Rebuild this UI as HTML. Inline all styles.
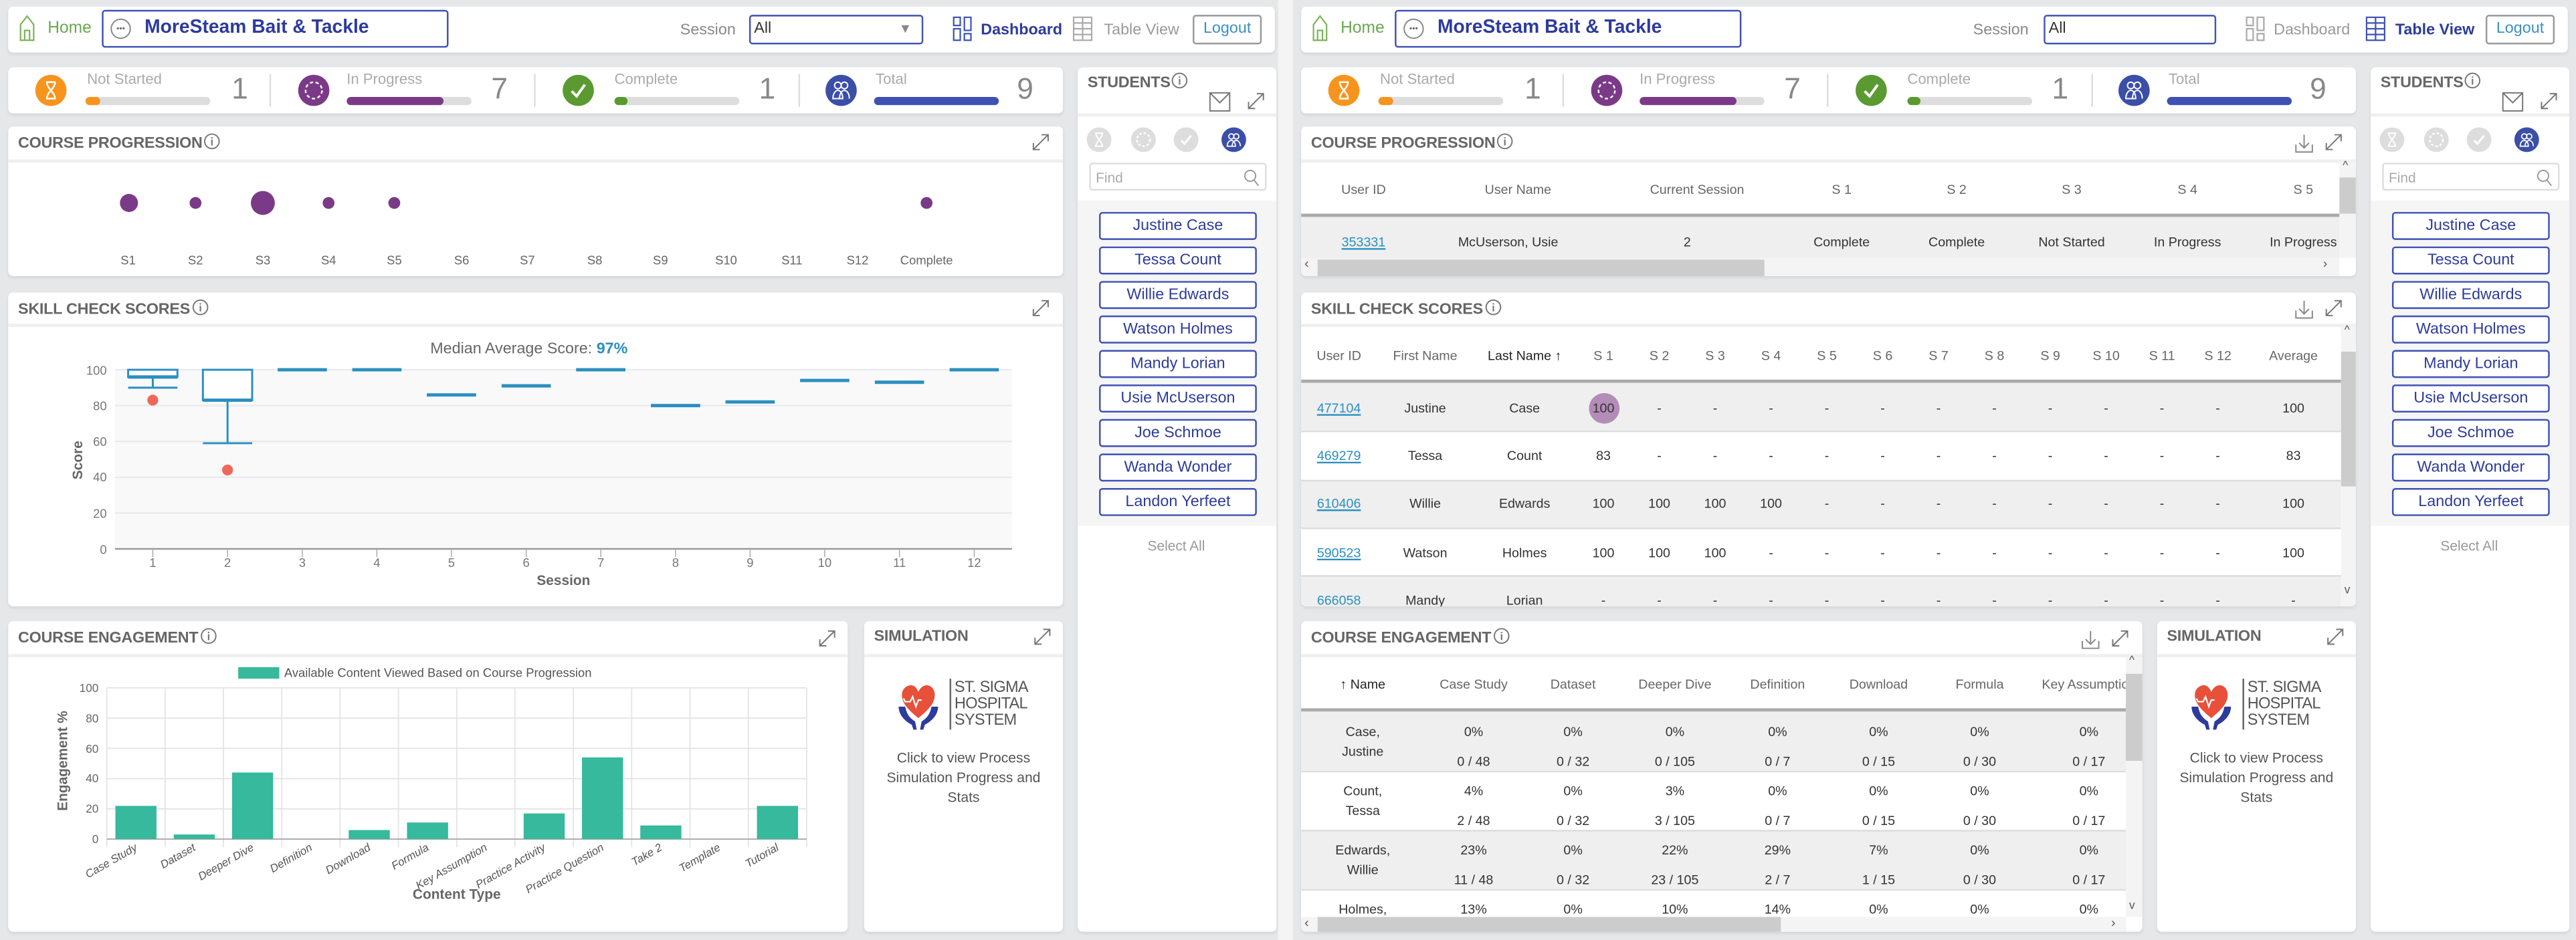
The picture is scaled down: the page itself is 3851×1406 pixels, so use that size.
<!DOCTYPE html>
<html><head><meta charset="utf-8"><style>
*{margin:0;padding:0;box-sizing:border-box}
html,body{width:3851px;height:1406px;overflow:hidden;background:#e6e7e9;font-family:"Liberation Sans",Arial,sans-serif}
#w{position:absolute;left:0;top:0;width:1568px;height:572px;transform:scale(2.456,2.458);transform-origin:0 0}
.half{position:absolute;top:0;width:778px;height:572px}
.card{position:absolute;background:#fff;border-radius:3px;box-shadow:0 1px 2px rgba(0,0,0,.08)}
.a{position:absolute;white-space:nowrap}
.c{position:absolute;white-space:nowrap;transform:translate(-50%,-50%)}
.ttl{position:absolute;left:6px;top:4px;font-size:9.5px;color:#666;font-weight:bold;letter-spacing:-.1px}
.hl{position:absolute;left:0;right:0;height:2px;background:#efefef}
.lbl{position:absolute;font-size:9px;color:#aaa;top:43px}
.bar{position:absolute;top:58.5px;width:76px;height:5px;border-radius:3px;background:#ddd;overflow:hidden}
.bar i{position:absolute;left:0;top:0;bottom:0;border-radius:3px}
.num{position:absolute;font-size:18px;color:#888;top:44px}
.dv{position:absolute;top:44px;width:1px;height:20px;background:#ddd}
.sb{position:absolute;left:13px;width:96px;height:17.5px;border:1px solid #3f51b5;border-bottom-width:1.5px;border-radius:2px;background:#fff;color:#2d3b9c;font-size:9.5px;text-align:center;line-height:16px}
.row{position:absolute;display:flex;font-size:8px;color:#333}
.row span{text-align:center;flex:none;white-space:nowrap;overflow:hidden}
.lnk{color:#2a8fc0;text-decoration:underline}
.hd{color:#666}
</style></head><body><div id="w">
<div class="a" style="left:778px;top:0;width:9px;height:572px;background:#f4f4f5"></div>

<!-- ============ LEFT HALF ============ -->
<div class="half" style="left:0">
 <!-- header -->
 <div class="card" style="left:5px;top:4px;width:771px;height:28px">
  <svg class="a" style="left:7px;top:5px" width="9" height="16" viewBox="0 0 9 16"><path d="M.5 15.5V6L4.5.8 8.5 6v9.5zM3 15.5V9.5h3v6" fill="none" stroke="#7bb35a" stroke-width=".9"/></svg>
  <div class="a" style="left:24px;top:8px;font-size:10px;color:#6aa84f">Home</div>
  <div class="a" style="left:57px;top:2px;width:211px;height:23px;border:1.5px solid #3f51b5;border-radius:2px"></div>
  <svg class="a" style="left:62px;top:7px" width="13" height="13"><circle cx="6.5" cy="6.5" r="5.8" fill="none" stroke="#888" stroke-width=".8"/><text x="6.5" y="8" font-size="5" text-anchor="middle" fill="#666">•••</text></svg>
  <div class="a" style="left:83px;top:6.5px;font-size:11.5px;color:#2d3b9c;font-weight:bold">MoreSteam Bait &amp; Tackle</div>
  <div class="a" style="left:409px;top:8.5px;font-size:9.5px;color:#888">Session</div>
  <div class="a" style="left:451px;top:5px;width:106px;height:18px;border:1px solid #4255b0;border-radius:2px;font-size:9.5px;color:#333;line-height:16px;padding-left:2px">All<span style="position:absolute;right:6px;top:0;color:#888;font-size:8px">▼</span></div>
  <svg class="a" style="left:575px;top:6px" width="12" height="15"><g fill="none" stroke="#3f51b5" stroke-width=".9"><rect x=".5" y=".5" width="4" height="5"/><rect x="7" y=".5" width="4" height="8"/><rect x=".5" y="7.5" width="4" height="7"/><rect x="7" y="10.5" width="4" height="4"/></g></svg>
  <div class="a" style="left:592px;top:8.5px;font-size:9.5px;color:#2d3b9c;font-weight:bold">Dashboard</div>
  <svg class="a" style="left:648px;top:6px" width="12" height="15"><g fill="none" stroke="#aaa" stroke-width=".9"><rect x=".5" y=".5" width="11" height="14"/><path d="M.5 4h11M.5 7.5h11M.5 11h11M6 .5v14"/></g></svg>
  <div class="a" style="left:667px;top:8.5px;font-size:9.5px;color:#999">Table View</div>
  <div class="a" style="left:721px;top:5px;width:42px;height:18px;border:1.5px solid #999;border-radius:2px;font-size:9.5px;color:#3a8fc7;text-align:center;line-height:15px">Logout</div>
 </div>
 <!-- stats -->
 <div class="card" style="left:5px;top:41px;width:642px;height:27.5px">
  <svg class="a" style="left:16px;top:4px" width="20" height="20"><circle cx="10" cy="10" r="9.5" fill="#f7941d"/><path d="M7 5h6M7 15h6M7.5 5c0 4 5 6 5 10M12.5 5c0 4-5 6-5 10" stroke="#fff" fill="none" stroke-width="1"/></svg>
  <div class="lbl" style="left:48px;top:2px">Not Started</div>
  <div class="bar" style="left:47px;top:17.5px"><i style="width:9px;background:#f7941d"></i></div>
  <div class="num" style="left:136px;top:3px">1</div>
  <div class="dv" style="left:159px;top:4px"></div>
  <svg class="a" style="left:176px;top:4px" width="20" height="20"><circle cx="10" cy="10" r="9.5" fill="#7b3a87"/><circle cx="10" cy="10" r="5" fill="none" stroke="#fff" stroke-width="1" stroke-dasharray="2 1.5"/></svg>
  <div class="lbl" style="left:206px;top:2px">In Progress</div>
  <div class="bar" style="left:206px;top:17.5px"><i style="width:59px;background:#7b3a87"></i></div>
  <div class="num" style="left:294px;top:3px">7</div>
  <div class="dv" style="left:320px;top:4px"></div>
  <svg class="a" style="left:337px;top:4px" width="20" height="20"><circle cx="10" cy="10" r="9.5" fill="#5a9a30"/><path d="M6 10.5l3 3 5-7" stroke="#fff" fill="none" stroke-width="1.6"/></svg>
  <div class="lbl" style="left:369px;top:2px">Complete</div>
  <div class="bar" style="left:369px;top:17.5px"><i style="width:8px;background:#5a9a30"></i></div>
  <div class="num" style="left:457px;top:3px">1</div>
  <div class="dv" style="left:481px;top:4px"></div>
  <svg class="a" style="left:497px;top:4px" width="20" height="20"><circle cx="10" cy="10" r="9.5" fill="#3b4ea8"/><g fill="none" stroke="#fff" stroke-width=".8"><circle cx="8" cy="7" r="2"/><circle cx="12" cy="7" r="2"/><path d="M5 15c0-3 1.5-5 3-5s3 2 3 5zM9 15c0-3 1.5-5 3-5s3 2 3 5"/></g></svg>
  <div class="lbl" style="left:528px;top:2px">Total</div>
  <div class="bar" style="left:527px;top:17.5px"><i style="width:76px;background:#3f51b5"></i></div>
  <div class="num" style="left:614px;top:3px">9</div>
 </div>
 <!-- students -->
 <div class="card" style="left:656px;top:41px;width:121px;height:526px">
  <div class="ttl" style="top:3px">STUDENTS<svg width="10" height="10" style="vertical-align:-1px;margin-left:1px"><circle cx="5" cy="5" r="4.4" fill="none" stroke="#777" stroke-width=".8"/><path d="M5 4v3.5M5 2.5v.8" stroke="#777" stroke-width=".9"/></svg></div>
  <svg class="a" style="left:80px;top:15px" width="13" height="12"><rect x=".5" y=".5" width="12" height="11" fill="none" stroke="#777" stroke-width=".8"/><path d="M.5 .5l6 6 6-6" fill="none" stroke="#777" stroke-width=".8"/></svg>
  <svg class="a" style="left:103px;top:15px" width="11" height="11"><path d="M6 1h4v4M10 1L1 10M1 6v4h4" fill="none" stroke="#777" stroke-width=".8"/></svg>
  <div class="hl" style="top:28px"></div>
  <svg class="a" style="left:5px;top:36px" width="110" height="16"><circle cx="8" cy="8" r="7.5" fill="#ddd"/><circle cx="35" cy="8" r="7.5" fill="#ddd"/><circle cx="61" cy="8" r="7.5" fill="#ddd"/><circle cx="90" cy="8" r="7.5" fill="#3b4ea8"/><path d="M5.5 4h5M5.5 12h5M6 4c0 3 4 5 4 8M10 4c0 3-4 5-4 8" stroke="#fff" fill="none" stroke-width=".8"/><circle cx="35" cy="8" r="4" fill="none" stroke="#fff" stroke-dasharray="1.5 1.2"/><path d="M58 8.5l2 2 4-5" stroke="#fff" fill="none" stroke-width="1.2"/><circle cx="88.5" cy="6" r="1.6" fill="none" stroke="#fff" stroke-width=".7"/><circle cx="91.5" cy="6" r="1.6" fill="none" stroke="#fff" stroke-width=".7"/><path d="M86 12c0-2 1-3.5 2.5-3.5S91 10 91 12zM89 12c0-2 1-3.5 2.5-3.5S94 10 94 12" fill="none" stroke="#fff" stroke-width=".7"/></svg>
  <div class="a" style="left:7px;top:58px;width:108px;height:17px;border:1px solid #ddd;border-radius:2px;font-size:8.5px;color:#aaa;padding:3px 0 0 3px">Find<svg style="position:absolute;right:3px;top:3px" width="10" height="11"><circle cx="4" cy="4" r="3.3" fill="none" stroke="#999" stroke-width=".8"/><path d="M6.3 6.5L9 10" stroke="#999" stroke-width=".8"/></svg></div>
  <div class="a" style="left:0;top:81px;width:121px;height:198px;background:#f5f5f5"></div>
  <div class="sb" style="top:87.5px">Justine Case</div>
  <div class="sb" style="top:108.5px">Tessa Count</div>
  <div class="sb" style="top:129.5px">Willie Edwards</div>
  <div class="sb" style="top:150.5px">Watson Holmes</div>
  <div class="sb" style="top:171.5px">Mandy Lorian</div>
  <div class="sb" style="top:192.5px">Usie McUserson</div>
  <div class="sb" style="top:213.5px">Joe Schmoe</div>
  <div class="sb" style="top:234.5px">Wanda Wonder</div>
  <div class="sb" style="top:255.5px">Landon Yerfeet</div>
  <div class="c" style="left:60px;top:291px;font-size:8.5px;color:#999">Select All</div>
 </div>
 <!-- course progression -->
 <div class="card" style="left:5px;top:77px;width:642px;height:91px">
  <div class="ttl">COURSE PROGRESSION<svg width="10" height="10" style="vertical-align:-1px;margin-left:1px"><circle cx="5" cy="5" r="4.4" fill="none" stroke="#777" stroke-width=".8"/><path d="M5 4v3.5M5 2.5v.8" stroke="#777" stroke-width=".9"/></svg></div>
  <svg class="a" style="left:623px;top:4px" width="11" height="11"><path d="M6 1h4v4M10 1L1 10M1 6v4h4" fill="none" stroke="#777" stroke-width=".8"/></svg>
  <div class="hl" style="top:20px"></div>
 </div>
 <!-- skill check -->
 <div class="card" style="left:5px;top:177.5px;width:642px;height:191px">
  <div class="ttl">SKILL CHECK SCORES<svg width="10" height="10" style="vertical-align:-1px;margin-left:1px"><circle cx="5" cy="5" r="4.4" fill="none" stroke="#777" stroke-width=".8"/><path d="M5 4v3.5M5 2.5v.8" stroke="#777" stroke-width=".9"/></svg></div>
  <svg class="a" style="left:623px;top:4px" width="11" height="11"><path d="M6 1h4v4M10 1L1 10M1 6v4h4" fill="none" stroke="#777" stroke-width=".8"/></svg>
  <div class="hl" style="top:19.5px"></div>
 </div>
 <!-- engagement -->
 <div class="card" style="left:5px;top:378px;width:511px;height:189px">
  <div class="ttl">COURSE ENGAGEMENT<svg width="10" height="10" style="vertical-align:-1px;margin-left:1px"><circle cx="5" cy="5" r="4.4" fill="none" stroke="#777" stroke-width=".8"/><path d="M5 4v3.5M5 2.5v.8" stroke="#777" stroke-width=".9"/></svg></div>
  <svg class="a" style="left:493px;top:5px" width="11" height="11"><path d="M6 1h4v4M10 1L1 10M1 6v4h4" fill="none" stroke="#777" stroke-width=".8"/></svg>
  <div class="hl" style="top:20px"></div>
 </div>
 <!-- simulation -->
 <div class="card" style="left:526px;top:378px;width:121px;height:189px">
  <div class="ttl">SIMULATION</div>
  <svg class="a" style="left:103px;top:4px" width="11" height="11"><path d="M6 1h4v4M10 1L1 10M1 6v4h4" fill="none" stroke="#777" stroke-width=".8"/></svg>
  <div class="hl" style="top:20px"></div>
  <svg class="a" style="left:19px;top:35px" width="32" height="32" viewBox="0 0 32 32"><path d="M14 24C8 19 4 15 4 10c0-4 3-6 5.5-6S13 6 14 8c1-2 2.5-4 5-4s5 2 5 6c0 5-4 9-10 14z" fill="#e8503a"/><path d="M5 12l1 2h3l1.5-3 2 6 1.5-4h2" fill="none" stroke="#fff" stroke-width=".9"/><path d="M2 17c0 5 4 9 8 11l1 3h2l-1-5c-3-2-5-4-6-9zM26 17c0 5-4 9-8 11l-1 3h-2l1-5c3-2 5-4 6-9z" fill="#2d3b9c"/></svg>
  <div class="a" style="left:52px;top:35px;width:1px;height:31px;background:#666"></div>
  <div class="a" style="left:55px;top:35.5px;font-size:9.6px;line-height:10px;color:#555;letter-spacing:-.3px">ST. SIGMA<br>HOSPITAL<br>SYSTEM</div>
  <div class="a" style="left:0;width:121px;top:77px;font-size:8.6px;line-height:12.2px;color:#555;text-align:center">Click to view Process<br>Simulation Progress and<br>Stats</div>
 </div>
 <!-- charts -->
 <svg class="a" style="left:0;top:0" width="778" height="572" font-family="Liberation Sans, Arial, sans-serif">
  <!-- progression dots -->
  <g fill="#7b3a87"><circle cx="78.5" cy="123.5" r="5.5"/><circle cx="119" cy="123.5" r="3.6"/><circle cx="160" cy="123.5" r="7.3"/><circle cx="200" cy="123.5" r="3.6"/><circle cx="240" cy="123.5" r="3.6"/><circle cx="564" cy="123.5" r="3.6"/></g>
  <g font-size="7.5" fill="#666" text-anchor="middle"><text x="78" y="161">S1</text><text x="119" y="161">S2</text><text x="160" y="161">S3</text><text x="200" y="161">S4</text><text x="240" y="161">S5</text><text x="281" y="161">S6</text><text x="321" y="161">S7</text><text x="362" y="161">S8</text><text x="402" y="161">S9</text><text x="442" y="161">S10</text><text x="482" y="161">S11</text><text x="522" y="161">S12</text><text x="564" y="161">Complete</text></g>
  <!-- skill chart -->
  <text x="322" y="215" font-size="9.5" fill="#666" text-anchor="middle">Median Average Score: <tspan fill="#2a8fc0" font-weight="bold">97%</tspan></text>
  <rect x="70" y="225" width="546" height="109" fill="#f9f9fa"/>
  <g stroke="#e6e8ee" stroke-width=".8"><path d="M70 225H616M70 246.8H616M70 268.6H616M70 290.4H616M70 312.2H616"/></g>
  <path d="M70 334H616" stroke="#999" stroke-width="1"/>
  <g stroke="#aaa" stroke-width=".6"><path d="M93 334v5M138.5 334v5M184 334v5M229.4 334v5M274.8 334v5M320.3 334v5M365.7 334v5M411.2 334v5M456.6 334v5M502 334v5M547.5 334v5M593 334v5"/></g>
  <g font-size="7.5" fill="#777" text-anchor="end"><text x="65" y="228">100</text><text x="65" y="249.5">80</text><text x="65" y="271.3">60</text><text x="65" y="293">40</text><text x="65" y="315">20</text><text x="65" y="337">0</text></g>
  <g font-size="7.5" fill="#777" text-anchor="middle"><text x="93" y="345">1</text><text x="138.5" y="345">2</text><text x="184" y="345">3</text><text x="229.4" y="345">4</text><text x="274.8" y="345">5</text><text x="320.3" y="345">6</text><text x="365.7" y="345">7</text><text x="411.2" y="345">8</text><text x="456.6" y="345">9</text><text x="502" y="345">10</text><text x="547.5" y="345">11</text><text x="593" y="345">12</text></g>
  <text x="343" y="356" font-size="8.5" font-weight="bold" fill="#666" text-anchor="middle">Session</text>
  <text transform="translate(50,280) rotate(-90)" font-size="8.5" font-weight="bold" fill="#666" text-anchor="middle">Score</text>
  <g stroke="#2a8fc0" fill="none" stroke-width="1.2">
   <rect x="78" y="225" width="30" height="4.4" fill="#fff"/><path d="M93 229.4v6.5M78 235.9h30" /><path d="M78 229.4h30" stroke-width="2"/>
   <rect x="123.5" y="225" width="30" height="18.5" fill="#fff"/><path d="M138.5 243.5v26.2M123.5 269.7h30"/><path d="M123.5 243.5h30" stroke-width="2"/>
  </g>
  <g stroke="#2a8fc0" stroke-width="2"><path d="M169 225h30M214.4 225h30M259.8 240.3h30M305.3 234.8h30M350.7 225h30M396.2 246.8h30M441.6 244.6h30M487 231.5h30M532.5 232.6h30M578 225h30"/></g>
  <g fill="#f0675a"><circle cx="93" cy="243.5" r="3.3"/><circle cx="138.5" cy="286" r="3.3"/></g>
  <!-- engagement -->
  <rect x="145" y="406" width="25" height="7" fill="#36b99c"/>
  <text x="173" y="412" font-size="7.5" fill="#555">Available Content Viewed Based on Course Progression</text>
  <g stroke="#e3e3e3" stroke-width=".7"><path d="M65 418.6H491M65 455.4H491M65 473.8H491M65 492.2H491M65 437H491"/><path d="M65 418.6v97M100.5 418.6v97M136 418.6v97M171.5 418.6v97M207 418.6v97M242.5 418.6v97M278 418.6v97M313.5 418.6v97M349 418.6v97M384.5 418.6v97M420 418.6v97M455.5 418.6v97M491 418.6v97"/></g>
  <path d="M65 510.6H491" stroke="#aaa" stroke-width=".8"/>
  <g font-size="7" fill="#666" text-anchor="end"><text x="60" y="421">100</text><text x="60" y="439.5">80</text><text x="60" y="458">60</text><text x="60" y="476">40</text><text x="60" y="494.5">20</text><text x="60" y="513">0</text></g>
  <g fill="#36b99c"><rect x="70.25" y="490.4" width="25" height="20.2"/><rect x="105.75" y="507.8" width="25" height="2.8"/><rect x="141.25" y="470.1" width="25" height="40.5"/><rect x="212.25" y="505.1" width="25" height="5.5"/><rect x="247.75" y="500.5" width="25" height="10.1"/><rect x="318.75" y="495" width="25" height="15.6"/><rect x="354.25" y="460.9" width="25" height="49.7"/><rect x="389.75" y="502.3" width="25" height="8.3"/><rect x="460.75" y="490.4" width="25" height="20.2"/></g>
  <g font-size="6.8" fill="#555" text-anchor="end" font-style="italic">
   <text transform="translate(84,517) rotate(-30)">Case Study</text><text transform="translate(119.5,517) rotate(-30)">Dataset</text><text transform="translate(155,517) rotate(-30)">Deeper Dive</text><text transform="translate(190.5,517) rotate(-30)">Definition</text><text transform="translate(226,517) rotate(-30)">Download</text><text transform="translate(261.5,517) rotate(-30)">Formula</text><text transform="translate(297,517) rotate(-30)">Key Assumption</text><text transform="translate(332.5,517) rotate(-30)">Practice Activity</text><text transform="translate(368,517) rotate(-30)">Practice Question</text><text transform="translate(403.5,517) rotate(-30)">Take 2</text><text transform="translate(439,517) rotate(-30)">Template</text><text transform="translate(474.5,517) rotate(-30)">Tutorial</text>
  </g>
  <text x="278" y="547" font-size="8.5" font-weight="bold" fill="#666" text-anchor="middle">Content Type</text>
  <text transform="translate(41,463) rotate(-90)" font-size="8.5" font-weight="bold" fill="#666" text-anchor="middle">Engagement %</text>
 </svg>
</div>

<!-- ============ RIGHT HALF ============ -->
<div class="half" style="left:787px">
 <div class="card" style="left:5px;top:4px;width:771px;height:28px">
  <svg class="a" style="left:7px;top:5px" width="9" height="16" viewBox="0 0 9 16"><path d="M.5 15.5V6L4.5.8 8.5 6v9.5zM3 15.5V9.5h3v6" fill="none" stroke="#7bb35a" stroke-width=".9"/></svg>
  <div class="a" style="left:24px;top:8px;font-size:10px;color:#6aa84f">Home</div>
  <div class="a" style="left:57px;top:2px;width:211px;height:23px;border:1.5px solid #3f51b5;border-radius:2px"></div>
  <svg class="a" style="left:62px;top:7px" width="13" height="13"><circle cx="6.5" cy="6.5" r="5.8" fill="none" stroke="#888" stroke-width=".8"/><text x="6.5" y="8" font-size="5" text-anchor="middle" fill="#666">•••</text></svg>
  <div class="a" style="left:83px;top:6.5px;font-size:11.5px;color:#2d3b9c;font-weight:bold">MoreSteam Bait &amp; Tackle</div>
  <div class="a" style="left:409px;top:8.5px;font-size:9.5px;color:#888">Session</div>
  <div class="a" style="left:452px;top:5px;width:105px;height:18px;border:1px solid #4255b0;border-radius:2px;font-size:9.5px;color:#333;line-height:16px;padding-left:2px">All</div>
  <svg class="a" style="left:575px;top:6px" width="12" height="15"><g fill="none" stroke="#aaa" stroke-width=".9"><rect x=".5" y=".5" width="4" height="5"/><rect x="7" y=".5" width="4" height="8"/><rect x=".5" y="7.5" width="4" height="7"/><rect x="7" y="10.5" width="4" height="4"/></g></svg>
  <div class="a" style="left:592px;top:8.5px;font-size:9.5px;color:#999">Dashboard</div>
  <svg class="a" style="left:648px;top:6px" width="12" height="15"><g fill="none" stroke="#3f51b5" stroke-width=".9"><rect x=".5" y=".5" width="11" height="14"/><path d="M.5 4h11M.5 7.5h11M.5 11h11M6 .5v14"/></g></svg>
  <div class="a" style="left:666px;top:8.5px;font-size:9.5px;color:#2d3b9c;font-weight:bold">Table View</div>
  <div class="a" style="left:721px;top:5px;width:42px;height:18px;border:1.5px solid #999;border-radius:2px;font-size:9.5px;color:#3a8fc7;text-align:center;line-height:15px">Logout</div>
 </div>
 <div class="card" style="left:5px;top:41px;width:642px;height:27.5px">
  <svg class="a" style="left:16px;top:4px" width="20" height="20"><circle cx="10" cy="10" r="9.5" fill="#f7941d"/><path d="M7 5h6M7 15h6M7.5 5c0 4 5 6 5 10M12.5 5c0 4-5 6-5 10" stroke="#fff" fill="none" stroke-width="1"/></svg>
  <div class="lbl" style="left:48px;top:2px">Not Started</div>
  <div class="bar" style="left:47px;top:17.5px"><i style="width:9px;background:#f7941d"></i></div>
  <div class="num" style="left:136px;top:3px">1</div>
  <div class="dv" style="left:159px;top:4px"></div>
  <svg class="a" style="left:176px;top:4px" width="20" height="20"><circle cx="10" cy="10" r="9.5" fill="#7b3a87"/><circle cx="10" cy="10" r="5" fill="none" stroke="#fff" stroke-width="1" stroke-dasharray="2 1.5"/></svg>
  <div class="lbl" style="left:206px;top:2px">In Progress</div>
  <div class="bar" style="left:206px;top:17.5px"><i style="width:59px;background:#7b3a87"></i></div>
  <div class="num" style="left:294px;top:3px">7</div>
  <div class="dv" style="left:320px;top:4px"></div>
  <svg class="a" style="left:337px;top:4px" width="20" height="20"><circle cx="10" cy="10" r="9.5" fill="#5a9a30"/><path d="M6 10.5l3 3 5-7" stroke="#fff" fill="none" stroke-width="1.6"/></svg>
  <div class="lbl" style="left:369px;top:2px">Complete</div>
  <div class="bar" style="left:369px;top:17.5px"><i style="width:8px;background:#5a9a30"></i></div>
  <div class="num" style="left:457px;top:3px">1</div>
  <div class="dv" style="left:481px;top:4px"></div>
  <svg class="a" style="left:497px;top:4px" width="20" height="20"><circle cx="10" cy="10" r="9.5" fill="#3b4ea8"/><g fill="none" stroke="#fff" stroke-width=".8"><circle cx="8" cy="7" r="2"/><circle cx="12" cy="7" r="2"/><path d="M5 15c0-3 1.5-5 3-5s3 2 3 5zM9 15c0-3 1.5-5 3-5s3 2 3 5"/></g></svg>
  <div class="lbl" style="left:528px;top:2px">Total</div>
  <div class="bar" style="left:527px;top:17.5px"><i style="width:76px;background:#3f51b5"></i></div>
  <div class="num" style="left:614px;top:3px">9</div>
 </div>
 <div class="card" style="left:656px;top:41px;width:121px;height:526px">
  <div class="ttl" style="top:3px">STUDENTS<svg width="10" height="10" style="vertical-align:-1px;margin-left:1px"><circle cx="5" cy="5" r="4.4" fill="none" stroke="#777" stroke-width=".8"/><path d="M5 4v3.5M5 2.5v.8" stroke="#777" stroke-width=".9"/></svg></div>
  <svg class="a" style="left:80px;top:15px" width="13" height="12"><rect x=".5" y=".5" width="12" height="11" fill="none" stroke="#777" stroke-width=".8"/><path d="M.5 .5l6 6 6-6" fill="none" stroke="#777" stroke-width=".8"/></svg>
  <svg class="a" style="left:103px;top:15px" width="11" height="11"><path d="M6 1h4v4M10 1L1 10M1 6v4h4" fill="none" stroke="#777" stroke-width=".8"/></svg>
  <div class="hl" style="top:28px"></div>
  <svg class="a" style="left:5px;top:36px" width="110" height="16"><circle cx="8" cy="8" r="7.5" fill="#ddd"/><circle cx="35" cy="8" r="7.5" fill="#ddd"/><circle cx="61" cy="8" r="7.5" fill="#ddd"/><circle cx="90" cy="8" r="7.5" fill="#3b4ea8"/><path d="M5.5 4h5M5.5 12h5M6 4c0 3 4 5 4 8M10 4c0 3-4 5-4 8" stroke="#fff" fill="none" stroke-width=".8"/><circle cx="35" cy="8" r="4" fill="none" stroke="#fff" stroke-dasharray="1.5 1.2"/><path d="M58 8.5l2 2 4-5" stroke="#fff" fill="none" stroke-width="1.2"/><circle cx="88.5" cy="6" r="1.6" fill="none" stroke="#fff" stroke-width=".7"/><circle cx="91.5" cy="6" r="1.6" fill="none" stroke="#fff" stroke-width=".7"/><path d="M86 12c0-2 1-3.5 2.5-3.5S91 10 91 12zM89 12c0-2 1-3.5 2.5-3.5S94 10 94 12" fill="none" stroke="#fff" stroke-width=".7"/></svg>
  <div class="a" style="left:7px;top:58px;width:108px;height:17px;border:1px solid #ddd;border-radius:2px;font-size:8.5px;color:#aaa;padding:3px 0 0 3px">Find<svg style="position:absolute;right:3px;top:3px" width="10" height="11"><circle cx="4" cy="4" r="3.3" fill="none" stroke="#999" stroke-width=".8"/><path d="M6.3 6.5L9 10" stroke="#999" stroke-width=".8"/></svg></div>
  <div class="a" style="left:0;top:81px;width:121px;height:198px;background:#f5f5f5"></div>
  <div class="sb" style="top:87.5px">Justine Case</div>
  <div class="sb" style="top:108.5px">Tessa Count</div>
  <div class="sb" style="top:129.5px">Willie Edwards</div>
  <div class="sb" style="top:150.5px">Watson Holmes</div>
  <div class="sb" style="top:171.5px">Mandy Lorian</div>
  <div class="sb" style="top:192.5px">Usie McUserson</div>
  <div class="sb" style="top:213.5px">Joe Schmoe</div>
  <div class="sb" style="top:234.5px">Wanda Wonder</div>
  <div class="sb" style="top:255.5px">Landon Yerfeet</div>
  <div class="c" style="left:60px;top:291px;font-size:8.5px;color:#999">Select All</div>
 </div>

 <!-- course progression table -->
 <div class="card" style="left:5px;top:77px;width:642px;height:91px;overflow:hidden">
  <div class="ttl">COURSE PROGRESSION<svg width="10" height="10" style="vertical-align:-1px;margin-left:1px"><circle cx="5" cy="5" r="4.4" fill="none" stroke="#777" stroke-width=".8"/><path d="M5 4v3.5M5 2.5v.8" stroke="#777" stroke-width=".9"/></svg></div>
  <svg class="a" style="left:605px;top:4px" width="11" height="12"><path d="M5.5 1v8M2.5 6l3 3 3-3M.5 7v4.5h10V7" fill="none" stroke="#888" stroke-width=".8"/></svg>
  <svg class="a" style="left:623px;top:4px" width="11" height="11"><path d="M6 1h4v4M10 1L1 10M1 6v4h4" fill="none" stroke="#777" stroke-width=".8"/></svg>
  <div class="hl" style="top:20px"></div>
  <div class="a" style="left:0;top:53px;width:632px;height:2px;background:#aaa"></div>
  <div class="a" style="left:0;top:55px;width:632px;height:25px;background:#efefef"></div>
  <div class="row hd" style="left:0;top:34px;height:10px">
   <span style="width:76px">User ID</span><span style="width:112px">User Name</span><span style="width:106px">Current Session</span><span style="width:70px">S 1</span><span style="width:70px">S 2</span><span style="width:70px">S 3</span><span style="width:71px">S 4</span><span style="width:70px">S 5</span>
  </div>
  <div class="row" style="left:0;top:66px;width:632px;overflow:hidden">
   <span style="width:76px" class="lnk">353331</span><span style="width:100px">McUserson, Usie</span><span style="width:118px">2</span><span style="width:70px">Complete</span><span style="width:70px">Complete</span><span style="width:70px">Not Started</span><span style="width:71px">In Progress</span><span style="width:70px">In Progress</span>
  </div>
  <div class="a" style="left:0;top:80px;width:632px;height:11px;background:#f4f4f4"></div>
  <div class="a" style="left:10px;top:81px;width:272px;height:10px;background:#ccc"></div>
  <div class="a" style="left:2px;top:79px;font-size:8px;color:#555">‹</div>
  <div class="a" style="left:622px;top:79px;font-size:8px;color:#555">›</div>
  <div class="a" style="left:632px;top:22px;width:10px;height:58px;background:#f4f4f4"></div>
  <div class="a" style="left:632px;top:31px;width:10px;height:22px;background:#ccc"></div>
  <div class="a" style="left:634px;top:21px;font-size:7px;color:#555">^</div>
 </div>

 <!-- skill check table -->
 <div class="card" style="left:5px;top:177.5px;width:642px;height:191px;overflow:hidden">
  <div class="ttl">SKILL CHECK SCORES<svg width="10" height="10" style="vertical-align:-1px;margin-left:1px"><circle cx="5" cy="5" r="4.4" fill="none" stroke="#777" stroke-width=".8"/><path d="M5 4v3.5M5 2.5v.8" stroke="#777" stroke-width=".9"/></svg></div>
  <svg class="a" style="left:605px;top:4px" width="11" height="12"><path d="M5.5 1v8M2.5 6l3 3 3-3M.5 7v4.5h10V7" fill="none" stroke="#888" stroke-width=".8"/></svg>
  <svg class="a" style="left:623px;top:4px" width="11" height="11"><path d="M6 1h4v4M10 1L1 10M1 6v4h4" fill="none" stroke="#777" stroke-width=".8"/></svg>
  <div class="hl" style="top:19.5px"></div>
  <div class="a" style="left:0;top:53.5px;width:633px;height:2px;background:#aaa"></div>
  <div class="a" style="left:0;top:55.5px;width:633px;height:29px;background:#efefef"></div>
  <div class="a" style="left:0;top:84.5px;width:633px;height:29.5px;background:#fff;border-top:1px solid #ddd"></div>
  <div class="a" style="left:0;top:114px;width:633px;height:29.5px;background:#efefef;border-top:1px solid #ddd"></div>
  <div class="a" style="left:0;top:143.5px;width:633px;height:29px;background:#fff;border-top:1px solid #ddd"></div>
  <div class="a" style="left:0;top:172.5px;width:633px;height:20px;background:#efefef;border-top:1px solid #ddd"></div>
  <svg class="a" style="left:174.5px;top:61px" width="19" height="19"><circle cx="9.5" cy="9.5" r="9.3" fill="#b48cb8"/></svg>
  <div class="row hd" style="left:0;top:34px"><span style="width:46px">User ID</span><span style="width:59px">First Name</span><span style="width:62px;color:#222">Last Name ↑</span><span style="width:34px">S 1</span><span style="width:34px">S 2</span><span style="width:34px">S 3</span><span style="width:34px">S 4</span><span style="width:34px">S 5</span><span style="width:34px">S 6</span><span style="width:34px">S 7</span><span style="width:34px">S 8</span><span style="width:34px">S 9</span><span style="width:34px">S 10</span><span style="width:34px">S 11</span><span style="width:34px">S 12</span><span style="width:58px">Average</span></div>
  <div class="row" style="left:0;top:66px"><span style="width:46px" class="lnk">477104</span><span style="width:59px">Justine</span><span style="width:62px">Case</span><span style="width:34px">100</span><span style="width:34px">-</span><span style="width:34px">-</span><span style="width:34px">-</span><span style="width:34px">-</span><span style="width:34px">-</span><span style="width:34px">-</span><span style="width:34px">-</span><span style="width:34px">-</span><span style="width:34px">-</span><span style="width:34px">-</span><span style="width:34px">-</span><span style="width:58px">100</span></div>
  <div class="row" style="left:0;top:95.5px"><span style="width:46px" class="lnk">469279</span><span style="width:59px">Tessa</span><span style="width:62px">Count</span><span style="width:34px">83</span><span style="width:34px">-</span><span style="width:34px">-</span><span style="width:34px">-</span><span style="width:34px">-</span><span style="width:34px">-</span><span style="width:34px">-</span><span style="width:34px">-</span><span style="width:34px">-</span><span style="width:34px">-</span><span style="width:34px">-</span><span style="width:34px">-</span><span style="width:58px">83</span></div>
  <div class="row" style="left:0;top:124.5px"><span style="width:46px" class="lnk">610406</span><span style="width:59px">Willie</span><span style="width:62px">Edwards</span><span style="width:34px">100</span><span style="width:34px">100</span><span style="width:34px">100</span><span style="width:34px">100</span><span style="width:34px">-</span><span style="width:34px">-</span><span style="width:34px">-</span><span style="width:34px">-</span><span style="width:34px">-</span><span style="width:34px">-</span><span style="width:34px">-</span><span style="width:34px">-</span><span style="width:58px">100</span></div>
  <div class="row" style="left:0;top:154px"><span style="width:46px" class="lnk">590523</span><span style="width:59px">Watson</span><span style="width:62px">Holmes</span><span style="width:34px">100</span><span style="width:34px">100</span><span style="width:34px">100</span><span style="width:34px">-</span><span style="width:34px">-</span><span style="width:34px">-</span><span style="width:34px">-</span><span style="width:34px">-</span><span style="width:34px">-</span><span style="width:34px">-</span><span style="width:34px">-</span><span style="width:34px">-</span><span style="width:58px">100</span></div>
  <div class="row" style="left:0;top:183px"><span style="width:46px" class="lnk">666058</span><span style="width:59px">Mandy</span><span style="width:62px">Lorian</span><span style="width:34px">-</span><span style="width:34px">-</span><span style="width:34px">-</span><span style="width:34px">-</span><span style="width:34px">-</span><span style="width:34px">-</span><span style="width:34px">-</span><span style="width:34px">-</span><span style="width:34px">-</span><span style="width:34px">-</span><span style="width:34px">-</span><span style="width:34px">-</span><span style="width:58px">-</span></div>
  <div class="a" style="left:633px;top:21px;width:9px;height:170px;background:#f4f4f4"></div>
  <div class="a" style="left:633px;top:36px;width:9px;height:82px;background:#ccc"></div>
  <div class="a" style="left:635px;top:20px;font-size:7px;color:#555">^</div>
  <div class="a" style="left:635px;top:178px;font-size:7px;color:#555">v</div>
 </div>

 <!-- engagement table -->
 <div class="card" style="left:5px;top:378px;width:512px;height:189px;overflow:hidden">
  <div class="ttl">COURSE ENGAGEMENT<svg width="10" height="10" style="vertical-align:-1px;margin-left:1px"><circle cx="5" cy="5" r="4.4" fill="none" stroke="#777" stroke-width=".8"/><path d="M5 4v3.5M5 2.5v.8" stroke="#777" stroke-width=".9"/></svg></div>
  <svg class="a" style="left:475px;top:5px" width="11" height="12"><path d="M5.5 1v8M2.5 6l3 3 3-3M.5 7v4.5h10V7" fill="none" stroke="#888" stroke-width=".8"/></svg>
  <svg class="a" style="left:493px;top:5px" width="11" height="11"><path d="M6 1h4v4M10 1L1 10M1 6v4h4" fill="none" stroke="#777" stroke-width=".8"/></svg>
  <div class="hl" style="top:20px"></div>
  <div class="a" style="left:0;top:53px;width:502px;height:2px;background:#aaa"></div>
  <div class="a" style="left:0;top:55px;width:502px;height:36px;background:#efefef"></div>
  <div class="a" style="left:0;top:91px;width:502px;height:36px;background:#fff;border-top:1px solid #ddd"></div>
  <div class="a" style="left:0;top:127px;width:502px;height:36px;background:#efefef;border-top:1px solid #ddd"></div>
  <div class="a" style="left:0;top:163px;width:502px;height:18px;background:#fff;border-top:1px solid #ddd"></div>
  <div class="a" style="left:0;top:20px;width:502px;height:170px;overflow:hidden">
   <div class="row hd" style="left:0;top:14px"><span style="width:75px;color:#222">↑ Name</span><span style="width:60px">Case Study</span><span style="width:61px">Dataset</span><span style="width:63px">Deeper Dive</span><span style="width:62px">Definition</span><span style="width:61px">Download</span><span style="width:62px">Formula</span><span style="width:71px">Key Assumption</span></div>
   <div class="row" style="left:0;top:43px"><span style="width:75px">Case,</span><span style="width:60px">0%</span><span style="width:61px">0%</span><span style="width:63px">0%</span><span style="width:62px">0%</span><span style="width:61px">0%</span><span style="width:62px">0%</span><span style="width:71px">0%</span></div>
   <div class="row" style="left:0;top:54.5px"><span style="width:75px">Justine</span></div>
   <div class="row" style="left:0;top:61px"><span style="width:75px"></span><span style="width:60px">0 / 48</span><span style="width:61px">0 / 32</span><span style="width:63px">0 / 105</span><span style="width:62px">0 / 7</span><span style="width:61px">0 / 15</span><span style="width:62px">0 / 30</span><span style="width:71px">0 / 17</span></div>
   <div class="row" style="left:0;top:79px"><span style="width:75px">Count,</span><span style="width:60px">4%</span><span style="width:61px">0%</span><span style="width:63px">3%</span><span style="width:62px">0%</span><span style="width:61px">0%</span><span style="width:62px">0%</span><span style="width:71px">0%</span></div>
   <div class="row" style="left:0;top:90.5px"><span style="width:75px">Tessa</span></div>
   <div class="row" style="left:0;top:97px"><span style="width:75px"></span><span style="width:60px">2 / 48</span><span style="width:61px">0 / 32</span><span style="width:63px">3 / 105</span><span style="width:62px">0 / 7</span><span style="width:61px">0 / 15</span><span style="width:62px">0 / 30</span><span style="width:71px">0 / 17</span></div>
   <div class="row" style="left:0;top:115px"><span style="width:75px">Edwards,</span><span style="width:60px">23%</span><span style="width:61px">0%</span><span style="width:63px">22%</span><span style="width:62px">29%</span><span style="width:61px">7%</span><span style="width:62px">0%</span><span style="width:71px">0%</span></div>
   <div class="row" style="left:0;top:126.5px"><span style="width:75px">Willie</span></div>
   <div class="row" style="left:0;top:133px"><span style="width:75px"></span><span style="width:60px">11 / 48</span><span style="width:61px">0 / 32</span><span style="width:63px">23 / 105</span><span style="width:62px">2 / 7</span><span style="width:61px">1 / 15</span><span style="width:62px">0 / 30</span><span style="width:71px">0 / 17</span></div>
   <div class="row" style="left:0;top:151px"><span style="width:75px">Holmes,</span><span style="width:60px">13%</span><span style="width:61px">0%</span><span style="width:63px">10%</span><span style="width:62px">14%</span><span style="width:61px">0%</span><span style="width:62px">0%</span><span style="width:71px">0%</span></div>
  </div>
  <div class="a" style="left:0;top:180px;width:502px;height:10px;background:#f4f4f4"></div>
  <div class="a" style="left:10px;top:180px;width:282px;height:10px;background:#ccc"></div>
  <div class="a" style="left:2px;top:179px;font-size:8px;color:#555">‹</div>
  <div class="a" style="left:493px;top:179px;font-size:8px;color:#555">›</div>
  <div class="a" style="left:502px;top:22px;width:10px;height:158px;background:#f4f4f4"></div>
  <div class="a" style="left:502px;top:32px;width:10px;height:53px;background:#ccc"></div>
  <div class="a" style="left:504px;top:21px;font-size:7px;color:#555">^</div>
  <div class="a" style="left:504px;top:170px;font-size:7px;color:#555">v</div>
 </div>

 <div class="card" style="left:526px;top:378px;width:121px;height:189px">
  <div class="ttl">SIMULATION</div>
  <svg class="a" style="left:103px;top:4px" width="11" height="11"><path d="M6 1h4v4M10 1L1 10M1 6v4h4" fill="none" stroke="#777" stroke-width=".8"/></svg>
  <div class="hl" style="top:20px"></div>
  <svg class="a" style="left:19px;top:35px" width="32" height="32" viewBox="0 0 32 32"><path d="M14 24C8 19 4 15 4 10c0-4 3-6 5.5-6S13 6 14 8c1-2 2.5-4 5-4s5 2 5 6c0 5-4 9-10 14z" fill="#e8503a"/><path d="M5 12l1 2h3l1.5-3 2 6 1.5-4h2" fill="none" stroke="#fff" stroke-width=".9"/><path d="M2 17c0 5 4 9 8 11l1 3h2l-1-5c-3-2-5-4-6-9zM26 17c0 5-4 9-8 11l-1 3h-2l1-5c3-2 5-4 6-9z" fill="#2d3b9c"/></svg>
  <div class="a" style="left:52px;top:35px;width:1px;height:31px;background:#666"></div>
  <div class="a" style="left:55px;top:35.5px;font-size:9.6px;line-height:10px;color:#555;letter-spacing:-.3px">ST. SIGMA<br>HOSPITAL<br>SYSTEM</div>
  <div class="a" style="left:0;width:121px;top:77px;font-size:8.6px;line-height:12.2px;color:#555;text-align:center">Click to view Process<br>Simulation Progress and<br>Stats</div>
 </div>
</div>
</div></body></html>
